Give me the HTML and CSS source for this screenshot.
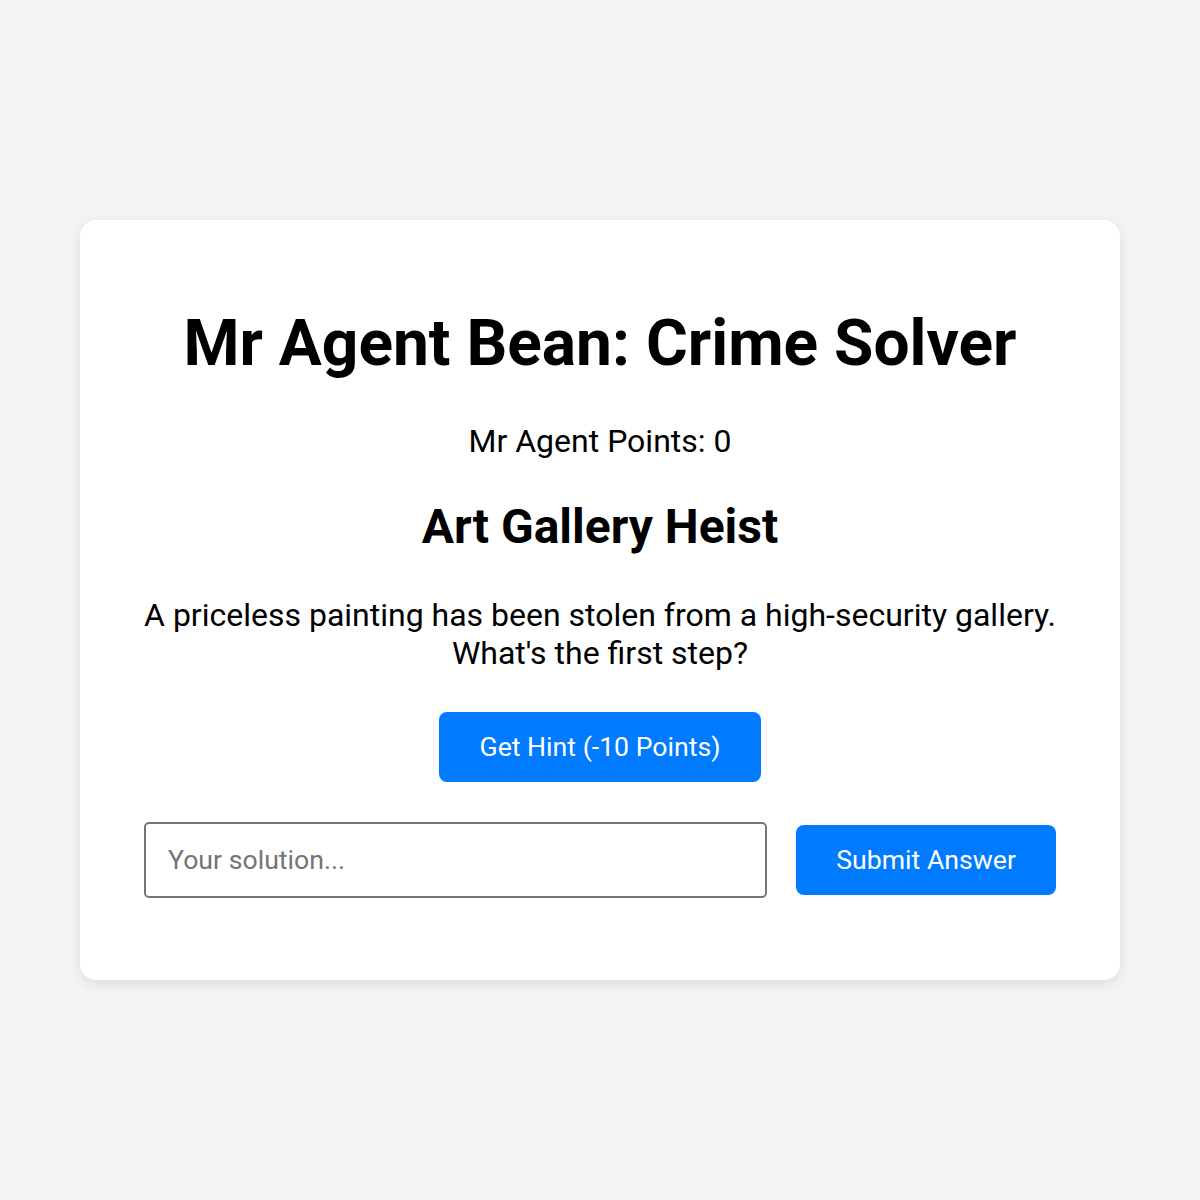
FILE: index.html
```html
<!DOCTYPE html>
<html lang="en">
<head>
<meta charset="utf-8">
<title>Mr Agent Bean: Crime Solver</title>
<link rel="stylesheet" href="styles.css">
</head>
<body>
<main class="card">
  <h1 class="title">Mr Agent Bean: Crime Solver</h1>
  <p class="points">Mr Agent Points: 0</p>
  <h2 class="case-title">Art Gallery Heist</h2>
  <p class="case-text">A priceless painting has been stolen from a high-security gallery. What's the first step?</p>
  <button class="btn hint-btn" type="button">Get Hint (-10 Points)</button>
  <div class="answer-row">
    <input class="answer-input" type="text" placeholder="Your solution...">
    <button class="btn submit-btn" type="button">Submit Answer</button>
  </div>
</main>
</body>
</html>
```

FILE: styles.css
```css
html, body {
  margin: 0;
  padding: 0;
}
body {
  background: #f4f4f4;
  font-family: Roboto, "Liberation Sans", Arial, sans-serif;
  color: #000;
  min-height: 1200px;
  display: flex;
  align-items: center;
  justify-content: center;
}
.card {
  box-sizing: border-box;
  width: 1040px;
  height: 760px;
  background: #fff;
  border-radius: 16px;
  box-shadow: 0 4px 14px rgba(0, 0, 0, 0.1);
  padding: 64px;
  display: flex;
  flex-direction: column;
  align-items: center;
  text-align: center;
}
.title {
  font-size: 64px;
  line-height: 75px;
  font-weight: 700;
  margin: 22px 0 0;
}
.points {
  font-size: 32px;
  line-height: 37.5px;
  margin: 41.6px 0 0;
}
.case-title {
  font-size: 48px;
  line-height: 56.25px;
  font-weight: 700;
  margin: 39.2px 0 0;
}
.case-text {
  font-size: 32px;
  line-height: 38px;
  margin: 40px 0 0;
}
.btn {
  font-family: inherit;
  font-size: 26.67px;
  line-height: 30px;
  color: #fff;
  background: #007bff;
  border: none;
  border-radius: 8px;
  padding: 20px 40px;
  cursor: pointer;
}
.hint-btn {
  margin-top: 40px;
}
.answer-row {
  align-self: stretch;
  display: flex;
  align-items: center;
  gap: 29px;
  margin-top: 40px;
}
.answer-input {
  flex: 1;
  min-width: 0;
  box-sizing: border-box;
  height: 76px;
  font-family: inherit;
  font-size: 26.67px;
  padding: 0 22px;
  border: 2px solid #767676;
  border-radius: 5px;
  color: #000;
  background: #fff;
}
.answer-input::placeholder {
  color: #757575;
}
```
